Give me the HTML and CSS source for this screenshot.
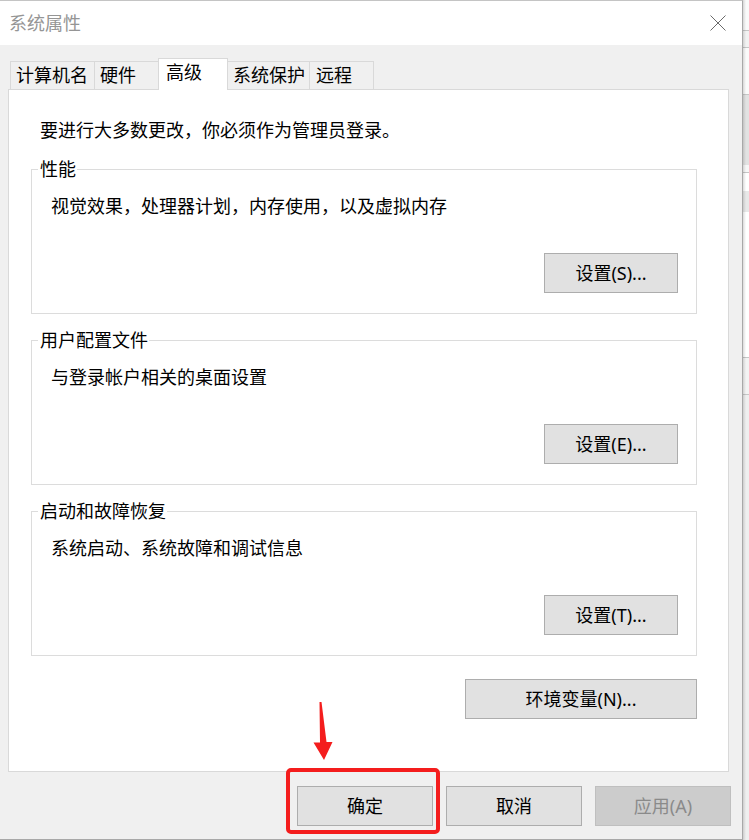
FILE: index.html
```html
<!DOCTYPE html>
<html lang="zh-CN">
<head>
<meta charset="utf-8">
<title>系统属性</title>
<link rel="stylesheet" href="styles.css">
</head>
<body>
<div class="screen">
  <div class="window">
    <div class="titlebar">
      <span class="title">系统属性</span>
      <svg class="close" width="16" height="16" viewBox="0 0 16 16" aria-hidden="true"><path d="M0.5 0.5L15.5 15.5M15.5 0.5L0.5 15.5" stroke="#6a6a6a" stroke-width="1" fill="none"/></svg>
    </div>
    <div class="client">
      <div class="tabs">
        <div class="tab t1">计算机名</div>
        <div class="tab t2">硬件</div>
        <div class="tab active">高级</div>
        <div class="tab t4">系统保护</div>
        <div class="tab t5">远程</div>
      </div>
      <div class="panel">
        <p class="notice">要进行大多数更改，你必须作为管理员登录。</p>
        <div class="group">
          <span class="legend">性能</span>
          <p class="desc">视觉效果，处理器计划，内存使用，以及虚拟内存</p>
          <button class="btn set">设置(S)...</button>
        </div>
        <div class="group">
          <span class="legend">用户配置文件</span>
          <p class="desc">与登录帐户相关的桌面设置</p>
          <button class="btn set">设置(E)...</button>
        </div>
        <div class="group">
          <span class="legend">启动和故障恢复</span>
          <p class="desc">系统启动、系统故障和调试信息</p>
          <button class="btn set">设置(T)...</button>
        </div>
        <div class="env-row">
          <button class="btn env">环境变量(N)...</button>
        </div>
      </div>
      <div class="actions">
        <button class="btn act">确定</button>
        <button class="btn act">取消</button>
        <button class="btn act disabled">应用(A)</button>
      </div>
    </div>
  </div>
  <div class="strip">
    <div class="s s-a"></div>
    <div class="s s-line"></div>
    <div class="s s-b"></div>
    <div class="s s-line"></div>
    <div class="s s-c"></div>
    <div class="s s-line"></div>
    <div class="s s-d"></div>
    <div class="s s-e"></div>
    <div class="s s-line"></div>
    <div class="s s-f"></div>
    <div class="s s-g"></div>
    <div class="s s-h"></div>
    <div class="s s-line"></div>
    <div class="s s-i"></div>
    <div class="s s-line"></div>
    <div class="s s-j"></div>
  </div>
</div>
<svg class="annot-arrow" width="26" height="62" viewBox="0 0 26 62" aria-hidden="true"><polygon points="9.5,2 11.5,2 16.5,42 22.5,42 14,60 3.5,42.5 10,42.5" fill="#f41d1d"/></svg>
<div class="annot-box"></div>
</body>
</html>
```
FILE: styles.css
```css
* { box-sizing: border-box; }

body {
  margin: 0;
  width: 749px;
  height: 840px;
  overflow: hidden;
  position: relative;
  font-family: "Noto Sans", "Noto Sans CJK SC", sans-serif;
  font-size: 18px;
  color: #000;
  background: #f0f0f0;
}

p { margin: 0; }

.screen {
  display: flex;
  width: 749px;
  height: 840px;
}

.window {
  width: 743px;
  height: 840px;
  flex: none;
  display: flex;
  flex-direction: column;
  background: #f0f0f0;
  border-top: 1px solid #c4c4c4;
  border-right: 1px solid #a8a8a8;
  border-bottom: 1px solid #a8a8a8;
}

.titlebar {
  height: 44px;
  flex: none;
  background: #fff;
  display: flex;
  align-items: center;
  justify-content: space-between;
  padding: 0 16px 0 9px;
}

.title {
  color: #959595;
  line-height: 24px;
}

.close { display: block; }

.client {
  flex: 1;
  padding-left: 8px;
}

.tabs {
  display: flex;
  align-items: flex-end;
  height: 31px;
  margin-top: 13px;
  padding-left: 2px;
}

.tab {
  height: 28px;
  line-height: 26px;
  padding-left: 5px;
  border: 1px solid #d9d9d9;
  border-bottom: none;
  background: #f0f0f0;
  white-space: nowrap;
  margin-left: -1px;
}

.t1 { width: 85px; margin-left: 0; }
.t2 { width: 67px; }
.t4 { width: 83px; }
.t5 { width: 65px; padding-left: 6px; }

.tab.active {
  position: relative;
  z-index: 1;
  width: 70px;
  height: 32px;
  margin-left: -3px;
  margin-bottom: -1px;
  padding-left: 7px;
  line-height: 27px;
  background: #fff;
}

.panel {
  width: 721px;
  height: 683px;
  background: #fff;
  border: 1px solid #d9d9d9;
  padding-top: 28px;
}

.notice {
  line-height: 24px;
  padding-left: 31px;
}

.group {
  position: relative;
  width: 666px;
  height: 145px;
  margin: 27px 0 0 22px;
  border: 1px solid #dcdcdc;
  display: flex;
  flex-direction: column;
  padding: 24px 18px 20px 19px;
}

.group + .group { margin-top: 26px; }

.legend {
  position: absolute;
  left: 6px;
  top: -13px;
  padding: 0 1px 0 2px;
  background: #fff;
  line-height: 24px;
}

.desc { line-height: 24px; }

.btn {
  font-family: inherit;
  font-size: 18px;
  color: #000;
  background: #e1e1e1;
  border: 1px solid #adadad;
  border-radius: 0;
  height: 40px;
  padding: 0;
  line-height: 38px;
  text-align: center;
}

.set {
  width: 134px;
  align-self: flex-end;
  margin-top: auto;
}

.env-row {
  display: flex;
  justify-content: flex-end;
  width: 688px;
  margin-top: 23px;
}

.env { width: 232px; }

.actions {
  display: flex;
  justify-content: flex-end;
  gap: 13px;
  margin-top: 14px;
  padding-right: 11px;
}

.act { width: 136px; }

.act.disabled {
  background: #cccccc;
  border-color: #bfbfbf;
  color: #8a8a8a;
}

.strip {
  flex: 1;
  display: flex;
  flex-direction: column;
  position: relative;
  background: #f0f0f0;
}

.strip::before {
  content: "";
  position: absolute;
  left: 0;
  top: 0;
  bottom: 0;
  width: 3px;
  background: linear-gradient(to right, rgba(0,0,0,0.14), rgba(0,0,0,0));
}

.s { flex: none; }
.s-line { height: 1px; background: #c6c6c6; }
.s-a { height: 30px; background: #fafafa; }
.s-b { height: 16px; background: #f2f2f2; }
.s-c { height: 46px; background: #fafafa; }
.s-d { height: 70px; background: #e2e2e2; }
.s-e { height: 7px; background: #f7f7f7; }
.s-f { height: 18px; background: #fff; }
.s-g { height: 21px; background: #e8e8e8; }
.s-h { height: 145px; background: #fff; }
.s-i { height: 36px; background: #f3f3f3; }
.s-j { flex: 1; background: #efefef; }

.annot-arrow {
  position: absolute;
  left: 310px;
  top: 700px;
}

.annot-box {
  position: absolute;
  left: 286px;
  top: 768px;
  width: 154px;
  height: 66px;
  border: 4px solid #f41d1d;
  border-radius: 5px;
}
```
